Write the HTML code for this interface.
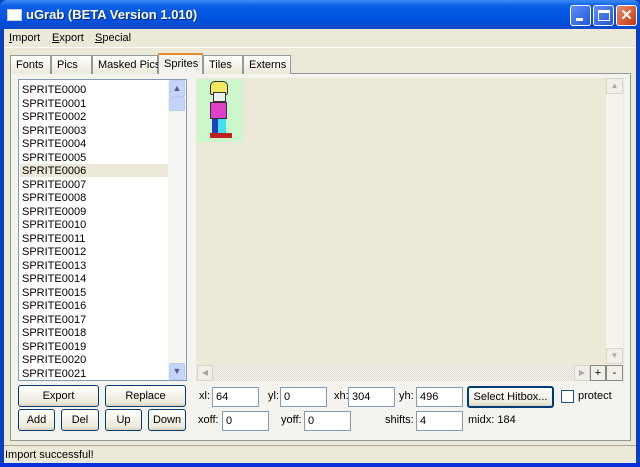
<!DOCTYPE html>
<html><head><style>
*{box-sizing:border-box;margin:0;padding:0}
body{width:640px;height:467px;overflow:hidden;background:#0a3fc0;font-family:"Liberation Sans",Arial,sans-serif;font-size:11px;color:#000;position:relative;white-space:nowrap}
.abs{position:absolute}
#title{left:0;top:0;width:640px;height:30px;background:linear-gradient(#3d8af7,#0a5ee6 20%,#0054e3 60%,#0848c8);border-radius:7px 7px 0 0}
#client{left:4px;top:29px;width:632px;height:434px;background:#ece9d8}
.tb{width:21px;height:21px;top:5px;border:1px solid #fff;border-radius:3px;background:linear-gradient(135deg,#5d8ff5,#2457d8)}
.btn{position:absolute;border:1px solid #003c74;border-radius:3px;background:linear-gradient(#fff,#ece9d8 85%,#d6d0c0);text-align:center;line-height:20px;height:22px}
.ed{position:absolute;background:#fff;border:1px solid #7f9db9;height:20px;line-height:18px;padding-left:3px}
.lbl{position:absolute}
.tab{position:absolute;top:55px;height:19px;border:1px solid #919b9c;border-bottom:none;background:linear-gradient(#fff,#ece9d8);padding:3px 0 0 5px}
.li{position:absolute;left:22px;font-size:11px;white-space:nowrap}
</style></head><body>
<div id="title" class="abs"></div>
<div class="abs" style="left:7px;top:9px;width:15px;height:12px;background:#fff;border:1px solid #ccc"></div>
<div class="abs" style="left:26px;top:7px;color:#fff;font-weight:bold;font-size:13px;text-shadow:1px 1px #0a2a80">uGrab (BETA Version 1.010)</div>
<div class="abs tb" style="left:570px"><div class="abs" style="left:5px;top:12px;width:7px;height:3px;background:#fff"></div></div>
<div class="abs tb" style="left:593px"><div class="abs" style="left:4px;top:4px;width:12px;height:11px;border:1px solid #fff;border-top:3px solid #fff"></div></div>
<div class="abs tb" style="left:616px;background:linear-gradient(135deg,#e88a6c,#c5390f);color:#fff;font-weight:bold;font-size:15px;text-align:center;line-height:19px">✕</div>
<div id="client" class="abs"></div>
<div class="abs" style="left:4px;top:47px;width:632px;height:1px;background:#fff"></div>
<div class="lbl" style="left:9px;top:32px"><u>I</u>mport</div>
<div class="lbl" style="left:52px;top:32px"><u>E</u>xport</div>
<div class="lbl" style="left:95px;top:32px"><u>S</u>pecial</div>
<div class="abs" style="left:10px;top:73px;width:621px;height:368px;border:1px solid #919b9c;background:#f4f3ee"></div>
<div class="tab" style="left:10px;width:41px">Fonts</div>
<div class="tab" style="left:51px;width:41px">Pics</div>
<div class="tab" style="left:92px;width:66px">Masked Pics</div>
<div class="tab" style="left:158px;top:53px;height:21px;width:45px;background:#f4f3ee;border-top:2px solid #e68b2c">Sprites</div>
<div class="tab" style="left:203px;width:40px">Tiles</div>
<div class="tab" style="left:243px;width:48px">Externs</div>
<div class="abs" style="left:18px;top:79px;width:169px;height:302px;background:#fff;border:1px solid #7f9db9;overflow:hidden"></div>
<div class="abs" style="left:20px;top:164px;width:148px;height:13px;background:#ece9d8"></div>
<div class="abs" style="left:168px;top:80px;width:18px;height:300px;background:#f4f4f0"></div>
<div class="abs" style="left:169px;top:80px;width:16px;height:17px;border:1px solid #b8cbf5;border-radius:2px;background:#c4d5fc;color:#4d6185;text-align:center;font-size:9px;line-height:15px">▲</div>
<div class="abs" style="left:169px;top:97px;width:16px;height:14px;border:1px solid #b8cbf5;border-radius:2px;background:#c4d5fc"></div>
<div class="abs" style="left:169px;top:363px;width:16px;height:17px;border:1px solid #b8cbf5;border-radius:2px;background:#c4d5fc;color:#4d6185;text-align:center;font-size:9px;line-height:15px">▼</div>
<div id="list"></div>
<div class="abs" style="left:196px;top:78px;width:428px;height:303px;background:#ece9d8"></div>
<div class="abs" style="left:606px;top:78px;width:17px;height:287px;background:#f4f3ee"></div>
<div class="abs" style="left:197px;top:365px;width:410px;height:16px;background:repeating-conic-gradient(#f4f3ee 0 25%,#e0ded2 0 50%) 0 0/2px 2px"></div>
<div class="abs" style="left:606px;top:78px;width:17px;height:16px;background:#f0efe8;border:1px solid #d8d5c8;color:#aaa;font-size:8px;text-align:center;line-height:14px">▲</div>
<div class="abs" style="left:606px;top:348px;width:17px;height:16px;background:#f0efe8;border:1px solid #d8d5c8;color:#aaa;font-size:8px;text-align:center;line-height:14px">▼</div>
<div class="abs" style="left:197px;top:365px;width:16px;height:16px;background:#f0efe8;border:1px solid #d8d5c8;color:#aaa;font-size:8px;text-align:center;line-height:14px">◀</div>
<div class="abs" style="left:574px;top:365px;width:16px;height:16px;background:#f0efe8;border:1px solid #d8d5c8;color:#aaa;font-size:8px;text-align:center;line-height:14px">▶</div>
<div class="abs" style="left:590px;top:365px;width:16px;height:16px;background:#f0efe8;border:1px solid #888;text-align:center;line-height:14px">+</div>
<div class="abs" style="left:606px;top:365px;width:17px;height:16px;background:#f0efe8;border:1px solid #888;text-align:center;line-height:14px">-</div>
<div class="abs" style="left:197px;top:79px;width:46px;height:63px;background:#ccf7cc"></div>
<div class="abs" style="left:210px;top:81px;width:18px;height:14px;background:#f4e860;border:1px solid #333;border-radius:5px 5px 2px 2px"></div>
<div class="abs" style="left:213px;top:92px;width:13px;height:10px;background:#eee;border:1px solid #333"></div>
<div class="abs" style="left:210px;top:102px;width:17px;height:17px;background:#e040c8;border:1px solid #333"></div>
<div class="abs" style="left:212px;top:119px;width:6px;height:16px;background:#2040c0"></div>
<div class="abs" style="left:218px;top:119px;width:8px;height:16px;background:#40e0f0"></div>
<div class="abs" style="left:210px;top:133px;width:22px;height:5px;background:#c02020"></div>
<div class="btn" style="left:18px;top:385px;width:81px">Export</div>
<div class="btn" style="left:105px;top:385px;width:81px">Replace</div>
<div class="btn" style="left:18px;top:409px;width:37px">Add</div>
<div class="btn" style="left:61px;top:409px;width:38px">Del</div>
<div class="btn" style="left:105px;top:409px;width:37px">Up</div>
<div class="btn" style="left:148px;top:409px;width:38px">Down</div>
<div class="lbl" style="left:199px;top:390px">xl:</div><div class="ed" style="left:212px;top:387px;width:47px">64</div>
<div class="lbl" style="left:268px;top:390px">yl:</div><div class="ed" style="left:280px;top:387px;width:47px">0</div>
<div class="lbl" style="left:334px;top:390px">xh:</div><div class="ed" style="left:348px;top:387px;width:47px">304</div>
<div class="lbl" style="left:399px;top:390px">yh:</div><div class="ed" style="left:416px;top:387px;width:47px">496</div>
<div class="btn" style="left:467px;top:386px;width:87px;border:2px solid #003c74;line-height:18px">Select Hitbox...</div>
<div class="abs" style="left:561px;top:390px;width:13px;height:13px;background:#fff;border:1px solid #1c5180"></div>
<div class="lbl" style="left:578px;top:390px">protect</div>
<div class="lbl" style="left:198px;top:414px">xoff:</div><div class="ed" style="left:222px;top:411px;width:47px">0</div>
<div class="lbl" style="left:281px;top:414px">yoff:</div><div class="ed" style="left:304px;top:411px;width:47px">0</div>
<div class="lbl" style="left:385px;top:414px">shifts:</div><div class="ed" style="left:416px;top:411px;width:47px">4</div>
<div class="lbl" style="left:468px;top:414px">midx: 184</div>
<div class="abs" style="left:4px;top:445px;width:632px;height:1px;background:#aca899"></div>
<div class="lbl" style="left:5px;top:449px">Import successful!</div>
<div class="abs" style="left:0;top:463px;width:640px;height:4px;background:#0831d9"></div>
<script>
var h='';for(var i=0;i<22;i++){h+='<div class="li" style="top:'+(84+i*13.5)+'px">SPRITE00'+(i<10?'0':'')+i+'</div>';}
document.getElementById('list').innerHTML=h;
</script>
</body></html>
